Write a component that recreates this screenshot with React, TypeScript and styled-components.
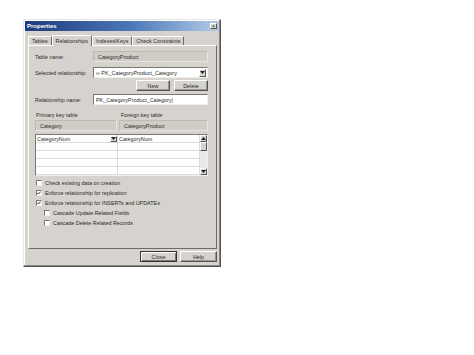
import React from "react";
import styled, { createGlobalStyle } from "styled-components";

const Global = createGlobalStyle`
  html, body { margin: 0; padding: 0; background: #ffffff; }
  body { font-family: "Liberation Sans", Arial, sans-serif; }
`;

const Page = styled.div`
  padding: 19px 0 0 23px;
`;

const Dialog = styled.div`
  width: 198px;
  height: 248px;
  box-sizing: border-box;
  background: #d6d3ce;
  border: 1px solid;
  border-color: #e8e6e2 #555 #555 #e8e6e2;
  box-shadow: inset -1px -1px 0 #8a877f, inset 1px 1px 0 #fff;
  padding: 1px;
  display: flex;
  flex-direction: column;
  font-size: 5.4px;
  color: #2a2a2a;
`;

const TitleBar = styled.div`
  height: 10px;
  background: linear-gradient(90deg, #1c3a7c 0%, #4d78b8 55%, #b4cbe6 100%);
  display: flex;
  align-items: center;
  justify-content: space-between;
  padding: 0 2px 0 2px;
`;

const Title = styled.span`
  color: #fff;
  font-weight: bold;
  font-size: 6px;
`;

const CloseBox = styled.div`
  width: 7px;
  height: 6px;
  background: #d6d3ce;
  border: 1px solid;
  border-color: #fff #555 #555 #fff;
  box-sizing: border-box;
  font-size: 5px;
  line-height: 4px;
  text-align: center;
  color: #333;
`;

const TabRow = styled.div`
  display: flex;
  align-items: flex-end;
  height: 12px;
  padding: 2px 0 0 3px;
  box-sizing: content-box;
`;

const Tab = styled.div<{ $active?: boolean }>`
  height: ${(p) => (p.$active ? 11 : 9)}px;
  box-sizing: border-box;
  padding: 0 3px;
  display: flex;
  align-items: center;
  border: 1px solid;
  border-bottom: none;
  border-color: #fff #6f6c66 transparent #fff;
  background: #d6d3ce;
  margin-bottom: ${(p) => (p.$active ? -1 : 0)}px;
  position: relative;
  z-index: ${(p) => (p.$active ? 2 : 1)};
  white-space: nowrap;
`;

const Panel = styled.div`
  margin: 0 2px 0 3px;
  height: 204px;
  box-sizing: border-box;
  border: 1px solid;
  border-color: #fff #6f6c66 #6f6c66 #fff;
  padding: 5px 8px 0 6px;
  display: flex;
  flex-direction: column;
`;

const FieldRow = styled.div<{ $mt?: number }>`
  display: flex;
  align-items: center;
  margin-top: ${(p) => p.$mt ?? 0}px;
`;

const Label = styled.span`
  width: 58px;
  flex: none;
  white-space: nowrap;
`;

const ReadBox = styled.div<{ $w?: number }>`
  ${(p) => (p.$w ? `width: ${p.$w}px;` : "flex: 1;")}
  height: 11px;
  box-sizing: border-box;
  background: #d0cdc7;
  border: 1px solid #e6e4e0;
  border-top-color: #bdbab4;
  border-left-color: #bdbab4;
  display: flex;
  align-items: center;
  padding-left: 4px;
`;

const Input = styled.div`
  flex: 1;
  height: 11px;
  box-sizing: border-box;
  background: #fff;
  border: 1px solid;
  border-color: #7a7770 #f0efec #f0efec #7a7770;
  display: flex;
  align-items: center;
  padding-left: 2px;
  white-space: nowrap;
`;

const Combo = styled(Input)`
  padding-right: 1px;
  justify-content: space-between;
`;

const ArrowBtn = styled.div<{ $h?: number }>`
  width: 7px;
  height: ${(p) => p.$h ?? 8}px;
  box-sizing: border-box;
  background: #d6d3ce;
  border: 1px solid;
  border-color: #fff #555 #555 #fff;
  display: flex;
  align-items: center;
  justify-content: center;
  flex: none;
`;

const Caret = ({ up }: { up?: boolean }) => (
  <svg width="5" height="3" viewBox="0 0 5 3">
    <path d={up ? "M0 3 L2.5 0 L5 3 Z" : "M0 0 L5 0 L2.5 3 Z"} fill="#222" />
  </svg>
);

const ButtonRow = styled.div<{ $mt?: number; $gap?: number }>`
  display: flex;
  justify-content: flex-end;
  gap: ${(p) => p.$gap ?? 4}px;
  margin-top: ${(p) => p.$mt ?? 0}px;
`;

const Button = styled.div<{ $w?: number; $default?: boolean }>`
  width: ${(p) => p.$w ?? 34}px;
  height: 11px;
  box-sizing: border-box;
  background: #d6d3ce;
  border: 1px solid;
  border-color: ${(p) => (p.$default ? "#333" : "#fff #555 #555 #fff")};
  box-shadow: ${(p) =>
    p.$default ? "inset 1px 1px 0 #fff, inset -1px -1px 0 #777" : "inset -1px -1px 0 #9a978f"};
  display: flex;
  align-items: center;
  justify-content: center;
`;

const Cols = styled.div<{ $mt?: number }>`
  display: flex;
  margin-top: ${(p) => p.$mt ?? 0}px;
`;

const ColLabel = styled.div<{ $w?: number }>`
  ${(p) => (p.$w ? `width: ${p.$w}px;` : "flex: 1;")}
  padding-left: 1px;
  height: 8px;
  display: flex;
  align-items: center;
  white-space: nowrap;
`;

const BoxGap = styled.div`
  width: 2px;
  flex: none;
`;

const Grid = styled.div`
  margin-top: 3px;
  height: 42px;
  box-sizing: border-box;
  background: #fff;
  border: 1px solid;
  border-color: #7a7770 #f0efec #f0efec #7a7770;
  display: flex;
`;

const GridBody = styled.div`
  flex: 1;
  display: flex;
  flex-direction: column;
`;

const GridRow = styled.div`
  display: flex;
  height: 7px;
  border-bottom: 1px solid #dcdcdc;
  flex: none;
`;

const Cell = styled.div<{ $w?: number }>`
  ${(p) => (p.$w ? `width: ${p.$w}px;` : "flex: 1;")}
  box-sizing: border-box;
  border-right: 1px solid #dcdcdc;
  display: flex;
  align-items: center;
  justify-content: space-between;
  padding-left: 1px;
  white-space: nowrap;
`;

const ScrollBar = styled.div`
  width: 7px;
  flex: none;
  background: #ebe9e5;
  display: flex;
  flex-direction: column;
  justify-content: space-between;
`;

const Thumb = styled.div`
  width: 7px;
  height: 9px;
  box-sizing: border-box;
  background: #d6d3ce;
  border: 1px solid;
  border-color: #fff #555 #555 #fff;
`;

const ScrollTop = styled.div`
  display: flex;
  flex-direction: column;
`;

const Checks = styled.div`
  margin-top: 2px;
  display: flex;
  flex-direction: column;
`;

const CheckRow = styled.div<{ $indent?: boolean }>`
  height: 10px;
  display: flex;
  align-items: center;
  gap: 3px;
  padding-left: ${(p) => (p.$indent ? 9 : 1)}px;
  white-space: nowrap;
`;

const Box = styled.div`
  width: 6px;
  height: 6px;
  box-sizing: border-box;
  background: #fff;
  border: 1px solid;
  border-color: #7a7770 #f0efec #f0efec #7a7770;
  display: flex;
  align-items: center;
  justify-content: center;
  flex: none;
`;

const Footer = styled.div`
  display: flex;
  justify-content: flex-end;
  gap: 3px;
  padding: 2px 2px 0 0;
`;

const Check = ({ checked, label, indent }: { checked?: boolean; label: string; indent?: boolean }) => (
  <CheckRow $indent={indent}>
    <Box>
      {checked && (
        <svg width="4" height="4" viewBox="0 0 4 4">
          <path d="M0.3 1.8 L1.4 3 L3.7 0.6" stroke="#111" strokeWidth="0.9" fill="none" />
        </svg>
      )}
    </Box>
    {label}
  </CheckRow>
);

export default function App() {
  return (
    <>
      <Global />
      <Page>
        <Dialog>
          <TitleBar>
            <Title>Properties</Title>
            <CloseBox>×</CloseBox>
          </TitleBar>
          <TabRow>
            <Tab>Tables</Tab>
            <Tab $active>Relationships</Tab>
            <Tab>Indexes/Keys</Tab>
            <Tab>Check Constraints</Tab>
          </TabRow>
          <Panel>
            <FieldRow>
              <Label>Table name:</Label>
              <ReadBox>CategoryProduct</ReadBox>
            </FieldRow>
            <FieldRow $mt={5}>
              <Label>Selected relationship:</Label>
              <Combo>
                <span>∞ PK_CategoryProduct_Category</span>
                <ArrowBtn>
                  <Caret />
                </ArrowBtn>
              </Combo>
            </FieldRow>
            <ButtonRow $mt={2}>
              <Button>New</Button>
              <Button>Delete</Button>
            </ButtonRow>
            <FieldRow $mt={3}>
              <Label>Relationship name:</Label>
              <Input>PK_CategoryProduct_Category|</Input>
            </FieldRow>
            <Cols $mt={6}>
              <ColLabel $w={82}>Primary key table</ColLabel>
              <BoxGap />
              <ColLabel>Foreign key table</ColLabel>
            </Cols>
            <Cols $mt={1}>
              <ReadBox $w={82}>Category</ReadBox>
              <BoxGap />
              <ReadBox>CategoryProduct</ReadBox>
            </Cols>
            <Grid>
              <GridBody>
                <GridRow>
                  <Cell $w={82}>
                    <span>CategoryNum</span>
                    <ArrowBtn $h={6}>
                      <Caret />
                    </ArrowBtn>
                  </Cell>
                  <Cell>CategoryNum</Cell>
                </GridRow>
                {[0, 1, 2, 3].map((i) => (
                  <GridRow key={i}>
                    <Cell $w={82} />
                    <Cell />
                  </GridRow>
                ))}
              </GridBody>
              <ScrollBar>
                <ScrollTop>
                  <ArrowBtn $h={7}>
                    <Caret up />
                  </ArrowBtn>
                  <Thumb />
                </ScrollTop>
                <ArrowBtn $h={7}>
                  <Caret />
                </ArrowBtn>
              </ScrollBar>
            </Grid>
            <Checks>
              <Check label="Check existing data on creation" />
              <Check checked label="Enforce relationship for replication" />
              <Check checked label="Enforce relationship for INSERTs and UPDATEs" />
              <Check indent label="Cascade Update Related Fields" />
              <Check indent label="Cascade Delete Related Records" />
            </Checks>
          </Panel>
          <Footer>
            <Button $w={37} $default>
              Close
            </Button>
            <Button $w={37}>Help</Button>
          </Footer>
        </Dialog>
      </Page>
    </>
  );
}
